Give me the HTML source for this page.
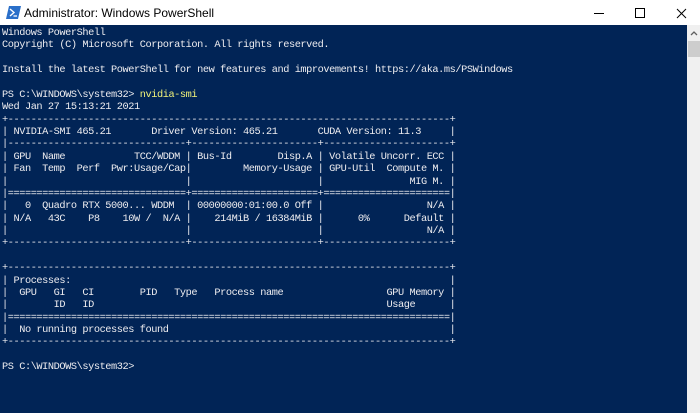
<!DOCTYPE html>
<html><head><meta charset="utf-8"><style>
html,body{margin:0;padding:0;width:700px;height:413px;overflow:hidden;background:#012456;}
#title{position:absolute;left:0;top:0;width:700px;height:25px;background:#fff;font-family:"Liberation Sans",sans-serif;font-size:12px;color:#000;}
#title .t{position:absolute;left:24px;top:6px;}
#term{position:absolute;left:1px;top:25px;width:686px;height:388px;background:#012456;}
pre{margin:0;position:absolute;left:1px;top:2px;font-family:"Liberation Mono",monospace;font-size:10.3px;letter-spacing:-0.44px;line-height:12.37px;color:#eeedf0;}
.y{color:#f3f37a;}
#sb{position:absolute;left:687px;top:25px;width:13px;height:388px;background:#f0f0f0;}
#thumb{position:absolute;left:1px;top:16px;width:12px;height:16px;background:#cdcdcd;}
</style></head><body>
<div id="title">
<svg style="position:absolute;left:6px;top:6px" width="15" height="13" viewBox="0 0 15 13"><polygon points="3,0 15,0 12,13 0,13" fill="#2a6fc9"/><path d="M4 3 L8 6.5 L4 10" stroke="#fff" stroke-width="1.4" fill="none"/><line x1="7.5" y1="10" x2="11" y2="10" stroke="#fff" stroke-width="1.3"/></svg>
<span class="t">Administrator: Windows PowerShell</span>
<svg style="position:absolute;left:590px;top:6px" width="100" height="14" viewBox="0 0 100 14"><line x1="4" y1="7.5" x2="14" y2="7.5" stroke="#000" stroke-width="1"/><rect x="45.5" y="2.5" width="9" height="9" fill="none" stroke="#000"/><path d="M87 3 L96 12 M96 3 L87 12" stroke="#000" stroke-width="1"/></svg>
</div>
<div id="term"><pre>Windows PowerShell
Copyright (C) Microsoft Corporation. All rights reserved.

Install the latest PowerShell for new features and improvements! https://aka.ms/PSWindows

PS C:\WINDOWS\system32&gt; <span class="y">nvidia-smi</span>
Wed Jan 27 15:13:21 2021
+-----------------------------------------------------------------------------+
| NVIDIA-SMI 465.21       Driver Version: 465.21       CUDA Version: 11.3     |
|-------------------------------+----------------------+----------------------+
| GPU  Name            TCC/WDDM | Bus-Id        Disp.A | Volatile Uncorr. ECC |
| Fan  Temp  Perf  Pwr:Usage/Cap|         Memory-Usage | GPU-Util  Compute M. |
|                               |                      |               MIG M. |
|===============================+======================+======================|
|   0  Quadro RTX 5000... WDDM  | 00000000:01:00.0 Off |                  N/A |
| N/A   43C    P8    10W /  N/A |    214MiB / 16384MiB |      0%      Default |
|                               |                      |                  N/A |
+-------------------------------+----------------------+----------------------+

+-----------------------------------------------------------------------------+
| Processes:                                                                  |
|  GPU   GI   CI        PID   Type   Process name                  GPU Memory |
|        ID   ID                                                   Usage      |
|=============================================================================|
|  No running processes found                                                 |
+-----------------------------------------------------------------------------+

PS C:\WINDOWS\system32&gt;</pre></div>
<div id="sb"><svg style="position:absolute;left:3px;top:5px" width="8" height="6" viewBox="0 0 8 6"><path d="M1 5 L4 2 L7 5" stroke="#606060" stroke-width="1.3" fill="none"/></svg><div id="thumb"></div></div>
</body></html>
